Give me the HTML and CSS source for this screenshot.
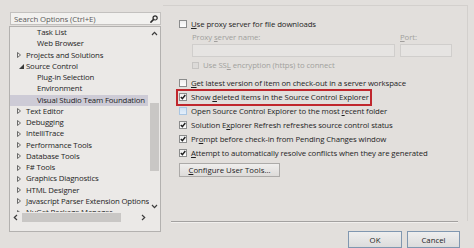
FILE: index.html
```html
<!DOCTYPE html>
<html>
<head>
<meta charset="utf-8">
<link rel="stylesheet" href="styles.css">
</head>
<body>
<div class="dialog">
  <div class="nav">
    <div class="search">
      <span class="placeholder">Search Options (Ctrl+E)</span>
      <svg class="mag" width="8" height="8" viewBox="0 0 8 8"><circle cx="5.1" cy="2.9" r="2.1" fill="none" stroke="#2b2b2b" stroke-width="1.2"/><path d="M3.6 4.4 L0.9 7.1" stroke="#2b2b2b" stroke-width="1.5" stroke-linecap="round"/></svg>
    </div>
    <div class="tree">
      <div class="tree-body">
        <ul class="rows">
          <li class="row l1">Task List</li>
          <li class="row l1">Web Browser</li>
          <li class="row l0"><span class="exp"><svg width="4" height="6" viewBox="0 0 4 6"><path d="M0.5 0.5 L3.5 3 L0.5 5.5 Z" fill="none" stroke="#5c5c5c" stroke-width="0.9"/></svg></span>Projects and Solutions</li>
          <li class="row l0"><span class="exp open"><svg width="5" height="5" viewBox="0 0 5 5"><path d="M5 0 L5 5 L0 5 Z" fill="#3a3a3a"/></svg></span>Source Control</li>
          <li class="row l1">Plug-in Selection</li>
          <li class="row l1">Environment</li>
          <li class="row l1 selected">Visual Studio Team Foundation</li>
          <li class="row l0"><span class="exp"><svg width="4" height="6" viewBox="0 0 4 6"><path d="M0.5 0.5 L3.5 3 L0.5 5.5 Z" fill="none" stroke="#5c5c5c" stroke-width="0.9"/></svg></span>Text Editor</li>
          <li class="row l0"><span class="exp"><svg width="4" height="6" viewBox="0 0 4 6"><path d="M0.5 0.5 L3.5 3 L0.5 5.5 Z" fill="none" stroke="#5c5c5c" stroke-width="0.9"/></svg></span>Debugging</li>
          <li class="row l0"><span class="exp"><svg width="4" height="6" viewBox="0 0 4 6"><path d="M0.5 0.5 L3.5 3 L0.5 5.5 Z" fill="none" stroke="#5c5c5c" stroke-width="0.9"/></svg></span>IntelliTrace</li>
          <li class="row l0"><span class="exp"><svg width="4" height="6" viewBox="0 0 4 6"><path d="M0.5 0.5 L3.5 3 L0.5 5.5 Z" fill="none" stroke="#5c5c5c" stroke-width="0.9"/></svg></span>Performance Tools</li>
          <li class="row l0"><span class="exp"><svg width="4" height="6" viewBox="0 0 4 6"><path d="M0.5 0.5 L3.5 3 L0.5 5.5 Z" fill="none" stroke="#5c5c5c" stroke-width="0.9"/></svg></span>Database Tools</li>
          <li class="row l0"><span class="exp"><svg width="4" height="6" viewBox="0 0 4 6"><path d="M0.5 0.5 L3.5 3 L0.5 5.5 Z" fill="none" stroke="#5c5c5c" stroke-width="0.9"/></svg></span>F# Tools</li>
          <li class="row l0"><span class="exp"><svg width="4" height="6" viewBox="0 0 4 6"><path d="M0.5 0.5 L3.5 3 L0.5 5.5 Z" fill="none" stroke="#5c5c5c" stroke-width="0.9"/></svg></span>Graphics Diagnostics</li>
          <li class="row l0"><span class="exp"><svg width="4" height="6" viewBox="0 0 4 6"><path d="M0.5 0.5 L3.5 3 L0.5 5.5 Z" fill="none" stroke="#5c5c5c" stroke-width="0.9"/></svg></span>HTML Designer</li>
          <li class="row l0"><span class="exp"><svg width="4" height="6" viewBox="0 0 4 6"><path d="M0.5 0.5 L3.5 3 L0.5 5.5 Z" fill="none" stroke="#5c5c5c" stroke-width="0.9"/></svg></span>Javascript Parser Extension Options</li>
          <li class="row l0"><span class="exp"><svg width="4" height="6" viewBox="0 0 4 6"><path d="M0.5 0.5 L3.5 3 L0.5 5.5 Z" fill="none" stroke="#5c5c5c" stroke-width="0.9"/></svg></span>NuGet Package Manager</li>
        </ul>
        <div class="vscroll">
          <div class="sarrow"><svg width="7" height="5" viewBox="0 0 7 5"><path d="M1 4 L3.5 1.3 L6 4" fill="none" stroke="#3c3c3c" stroke-width="1.2"/></svg></div>
          <div class="vtrack"><div class="vthumb"></div></div>
          <div class="sarrow"><svg width="7" height="5" viewBox="0 0 7 5"><path d="M1 1 L3.5 3.7 L6 1" fill="none" stroke="#3c3c3c" stroke-width="1.2"/></svg></div>
        </div>
      </div>
      <div class="hbar">
        <div class="hscroll">
          <div class="harrow"><svg width="5" height="7" viewBox="0 0 5 7"><path d="M4 1 L1.3 3.5 L4 6" fill="none" stroke="#3c3c3c" stroke-width="1.2"/></svg></div>
          <div class="htrack"><div class="hthumb"></div></div>
          <div class="harrow"><svg width="5" height="7" viewBox="0 0 5 7"><path d="M1 1 L3.7 3.5 L1 6" fill="none" stroke="#3c3c3c" stroke-width="1.2"/></svg></div>
        </div>
        <div class="corner"></div>
      </div>
    </div>
  </div>

  <div class="content">
    <div class="page">
      <div class="opt first"><span class="cb"></span><span><u>U</u>se proxy server for file downloads</span></div>
      <div class="proxy">
        <span class="lbl">Proxy <u>s</u>erver name:</span>
        <span class="lbl"><u>P</u>ort:</span>
        <span class="field"></span>
        <span class="field"></span>
      </div>
      <div class="opt sub disabled"><span class="cb dis"></span><span>Use SS<u>L</u> encryption (https) to connect</span></div>
      <div class="opt gap"><span class="cb"></span><span><u>G</u>et latest version of item on check-out in a server workspace</span></div>
      <div class="opt marked"><span class="cb"><svg width="6" height="6" viewBox="0 0 6 6"><path d="M0.8 2.9 L2.4 4.6 L5.3 1" fill="none" stroke="#1f1f1f" stroke-width="1.4"/></svg></span><span>Show <u>d</u>eleted items in the Source Control Explorer</span><span class="callout"></span></div>
      <div class="opt"><span class="cb hover"></span><span>Open Source Control Explorer to the most <u>r</u>ecent folder</span></div>
      <div class="opt"><span class="cb"><svg width="6" height="6" viewBox="0 0 6 6"><path d="M0.8 2.9 L2.4 4.6 L5.3 1" fill="none" stroke="#1f1f1f" stroke-width="1.4"/></svg></span><span>Solution E<u>x</u>plorer Refresh refreshes source control status</span></div>
      <div class="opt"><span class="cb"><svg width="6" height="6" viewBox="0 0 6 6"><path d="M0.8 2.9 L2.4 4.6 L5.3 1" fill="none" stroke="#1f1f1f" stroke-width="1.4"/></svg></span><span>Pr<u>o</u>mpt before check-in from Pending Changes window</span></div>
      <div class="opt"><span class="cb"><svg width="6" height="6" viewBox="0 0 6 6"><path d="M0.8 2.9 L2.4 4.6 L5.3 1" fill="none" stroke="#1f1f1f" stroke-width="1.4"/></svg></span><span><u>A</u>ttempt to automatically resolve conflicts when they are generated</span></div>
      <button class="tool-btn"><u>C</u>onfigure User Tools...</button>
    </div>
    <div class="sep"></div>
    <div class="footer">
      <button class="btn default">OK</button>
      <button class="btn">Cancel</button>
    </div>
  </div>
</div>
</body>
</html>
```

FILE: styles.css
```css
* { box-sizing: border-box; margin: 0; padding: 0; }
html, body { width: 474px; height: 248px; overflow: hidden; }
body {
  background: #e2dfdc;
  font-family: "Open Sans", "Noto Sans", sans-serif;
  font-size: 7.8px;
  letter-spacing: -0.1px;
  color: #1e1e1e;
}
u { text-decoration: underline; text-underline-offset: 1px; }

.dialog { display: flex; height: 248px; }

/* left navigation */
.nav { width: 162px; flex: none; padding: 12px 0 0 9px; display: flex; flex-direction: column; }
.search {
  margin-left: 1px; width: 151px; height: 13px;
  background: #f2f1ef; border: 1px solid #c3c1bf;
  display: flex; align-items: center; justify-content: space-between;
  padding: 0 2px 0 3px; color: #5a5a5a;
}
.mag { display: block; }
.tree {
  margin-top: 1px; width: 152px; height: 206px;
  border: 1px solid #b3b1af; background: #ebe9e7;
  display: flex; flex-direction: column;
}
.tree-body { display: flex; height: 185px; }
.rows { list-style: none; flex: 1; overflow: hidden; letter-spacing: -0.16px; }
.row {
  height: 11.25px; line-height: 11.25px; white-space: nowrap;
  display: flex; align-items: center;
}
.row.l0 { padding-left: 7px; }
.row.l1 { padding-left: 27px; }
.row.selected { background: #cdcbd6; margin-right: 1px; }
.exp { width: 9px; flex: none; display: flex; align-items: center; }
.exp.open { padding-left: 2px; }
.exp svg { display: block; }

.vscroll { width: 11px; flex: none; display: flex; flex-direction: column; }
.sarrow { height: 12px; display: flex; align-items: center; justify-content: center; }
.sarrow svg { display: block; }
.vtrack { flex: 1; }
.vthumb { margin: 64px 1px 0 1px; height: 68px; background: #c9c7c5; }

.hbar { display: flex; height: 11px; }
.hscroll { flex: 1; display: flex; }
.harrow { width: 11px; display: flex; align-items: center; justify-content: center; }
.harrow svg { display: block; }
.htrack { flex: 1; }
.hthumb { margin: 1px 0 1px 1px; width: 99px; height: 9px; background: #c9c7c5; }
.corner { width: 11px; }

/* right content */
.content { flex: 1; padding: 5px 6px 0 0; display: flex; flex-direction: column; }
.page {
  margin-left: 1px; height: 217px;
  border-top: 1px solid #d3d0cd; border-right: 1px solid #d3d0cd;
  padding-left: 16px;
  display: flex; flex-direction: column; align-items: flex-start;
}
.opt { height: 14px; display: flex; align-items: center; gap: 4px; white-space: nowrap; position: relative; }
.opt.first { margin-top: 11px; }
.opt.sub { margin-left: 13px; margin-top: 1px; }
.opt.gap { margin-top: 4px; }
.cb {
  width: 8px; height: 8px; flex: none;
  border: 1px solid #8b8c8c;
  background: linear-gradient(#eeeeee, #fdfdfd);
  display: flex; align-items: center; justify-content: center;
}
.cb svg { display: block; }
.cb.dis { width: 7px; height: 7px; border-color: #c6c4c2; background: #dcdad8; }
.cb.hover { border-color: #a9c6e3; background: linear-gradient(#cfe2f4, #e3eefa); }
.disabled { color: #a19f9d; }

.proxy {
  margin-left: 13px;
  display: grid; grid-template-columns: 203px 52px; column-gap: 5px;
  color: #a19f9d;
}
.lbl { height: 10px; line-height: 10px; margin-top: 1px; }
.field { margin-top: 2px; height: 13px; border: 1px solid #d0cecc; background: #e6e4e2; }

.callout {
  position: absolute; left: -3px; top: -1px;
  width: 196px; height: 17px;
  border: 2px solid #c0272d;
}

.tool-btn {
  margin-top: 3px; width: 101px; height: 14px;
  font: inherit; color: #1e1e1e;
  border: 1px solid #acaaa8;
  background: linear-gradient(#efeeed, #dddbd9);
}

.sep { margin: 0 10px 0 9px; height: 2px; border-top: 1px solid #a3a1a0; border-bottom: 1px solid #f1efed; }
.footer { display: flex; justify-content: flex-end; gap: 5px; padding: 8px 8px 0 0; }
.btn {
  width: 54px; height: 17px; font: inherit; color: #1e1e1e;
  border: 1px solid #8097b0;
  background: linear-gradient(#eeeeee, #dcdcdc);
}
.btn + .btn { width: 53px; }
```
